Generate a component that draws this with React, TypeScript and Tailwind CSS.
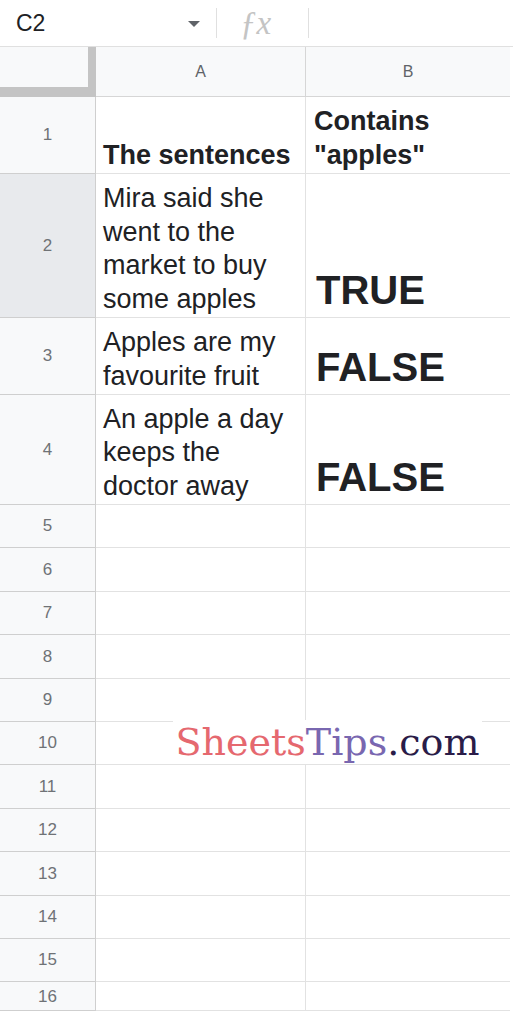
const sans = { fontFamily: '"Liberation Sans", Arial, sans-serif' }

type Row = {
  n: number
  h: string
  a?: React.ReactNode
  b?: React.ReactNode
  selected?: boolean
}

const rows: Row[] = [
  {
    n: 1,
    h: "h-[77px]",
    a: <span className="font-bold">The sentences</span>,
    b: (
      <span className="font-bold">
        Contains
        <br />
        "apples"
      </span>
    ),
  },
  {
    n: 2,
    h: "h-[144px]",
    selected: true,
    a: (
      <>
        Mira said she
        <br />
        went to the
        <br />
        market to buy
        <br />
        some apples
      </>
    ),
    b: "TRUE",
  },
  {
    n: 3,
    h: "h-[77px]",
    a: (
      <>
        Apples are my
        <br />
        favourite fruit
      </>
    ),
    b: "FALSE",
  },
  {
    n: 4,
    h: "h-[110px]",
    a: (
      <>
        An apple a day
        <br />
        keeps the
        <br />
        doctor away
      </>
    ),
    b: "FALSE",
  },
]

for (let i = 5; i <= 16; i++) rows.push({ n: i, h: i === 16 ? "h-[29px]" : "h-[43.4px]" })

function TopBar() {
  return (
    <div className="flex h-[47px] items-center border-b border-[#e0e0e0] bg-white">
      <div className="w-[188px] pl-[16px] text-[23px] text-[#202124]">C2</div>
      <div className="mt-[2px] h-0 w-0 border-x-[6px] border-t-[6px] border-x-transparent border-t-[#5f6368]" />
      <div className="ml-[16px] h-[30px] w-px bg-[#e0e0e0]" />
      <div
        className="ml-[23px] w-[68px] text-[33px] italic leading-none text-[#c4c4c4]"
        style={{ fontFamily: '"Liberation Serif", serif' }}
      >
        ƒx
      </div>
      <div className="h-[30px] w-px bg-[#e0e0e0]" />
    </div>
  )
}

function ColumnHeader() {
  return (
    <div className="flex h-[50px] text-[16px] text-[#5f6368]">
      <div className="w-[96px] border-b-[10px] border-r-[8px] border-[#c4c4c4] bg-[#f8f9fa]" />
      <div className="flex w-[210px] items-center justify-center border-b border-r border-[#d6d6d6] bg-[#f8f9fa]">A</div>
      <div className="flex w-[204px] items-center justify-center border-b border-[#d6d6d6] bg-[#f8f9fa]">B</div>
    </div>
  )
}

export default function App() {
  return (
    <div className="relative h-[1024px] w-[513px] overflow-hidden bg-white" style={sans}>
      <TopBar />
      <ColumnHeader />
      {rows.map((r) => (
        <div key={r.n} className={`flex ${r.h}`}>
          <div
            className={`flex w-[96px] items-center justify-center border-b border-r border-[#cfcfcf] text-[17px] text-[#6f7276] ${
              r.selected ? "bg-[#e8eaed]" : "bg-[#f8f9fa]"
            }`}
          >
            {r.n}
          </div>
          <div className="flex w-[210px] items-end border-b border-r border-[#e2e2e2] pb-[1px] pl-[7px] text-[27px] leading-[33.5px] text-[#202124]">
            <div>{r.a}</div>
          </div>
          <div
            className={`flex w-[204px] items-end border-b border-[#e2e2e2] ${
              r.n === 1
                ? "pb-[1px] pl-[8px] text-[27px] leading-[33.5px]"
                : "pb-[4px] pl-[10px] text-[40px] font-bold leading-[46px]"
            } text-[#202124]`}
          >
            <div>{r.b}</div>
          </div>
        </div>
      ))}

      <div
        className="absolute left-[173px] top-[720px] flex h-[44px] w-[309px] items-center justify-center bg-white text-[38px]"
        style={{ fontFamily: '"DejaVu Serif", serif' }}
      >
        <span className="text-[#e5686f]">Sheets</span>
        <span className="text-[#7967b0]">Tips</span>
        <span className="text-[#2a1c48]">.com</span>
      </div>
    </div>
  )
}
